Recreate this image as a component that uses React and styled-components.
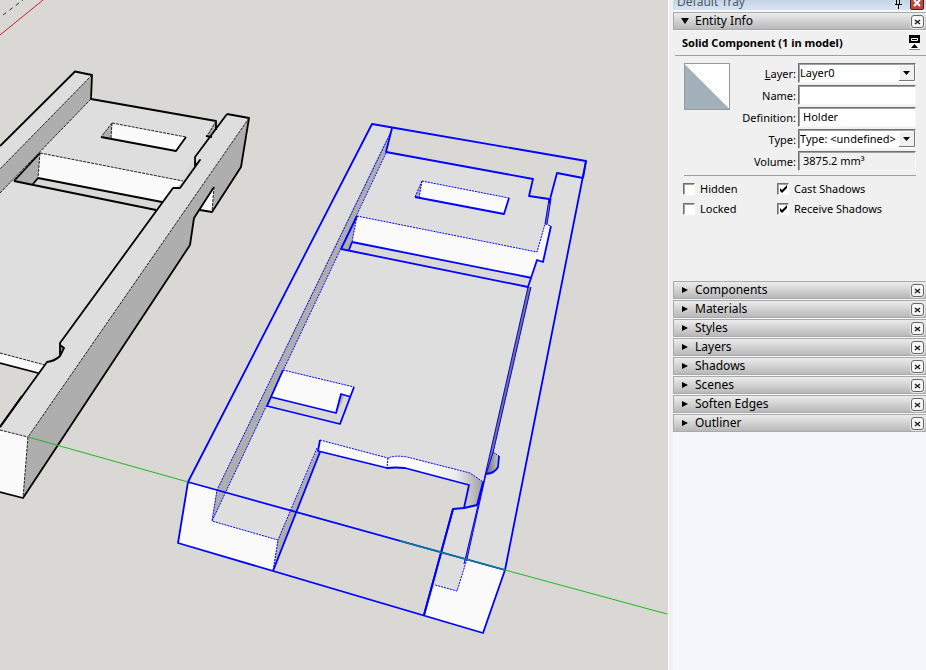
import React from "react";
import styled, { createGlobalStyle } from "styled-components";

const Global = createGlobalStyle`
  * { box-sizing: border-box; }
  body { margin: 0; background: #d9d8d4; overflow: hidden; font: 11px/14px "Noto Sans", sans-serif; color: #000; }
  button, input, select { font: inherit; color: inherit; margin: 0; }
`;

const Workspace = styled.div`
  display: grid;
  grid-template-columns: minmax(0, 1fr) 259px;
  height: 100vh;
`;
const Viewport = styled.main`
  min-width: 0;
  min-height: 0;
  background: #d9d8d4;
  svg { display: block; width: 100%; height: 100%; }
`;
const Tray = styled.aside`
  display: flex;
  flex-direction: column;
  overflow: hidden;
  background: #f4f8fd;
  border-left: 1px solid #d9d8d4;
  box-shadow: inset 1px 0 #fff, inset 5px 0 #f0f0f0;
  padding-left: 5px;
`;
const TrayTitle = styled.header`
  display: flex;
  align-items: flex-end;
  height: 10px;
  margin-bottom: 2px;
  padding: 0 2px 0 4px;
  background: linear-gradient(#c5d5e6, #d7e4f2);
  color: #4d5968;
  font: 12px/16px "Noto Sans", sans-serif;
  flex: none;
  h1 { flex: 1; margin: 0; font: inherit; }
`;
const TitleButton = styled.button`
  width: ${(p) => (p.$close ? 14 : 16)}px;
  height: 14px;
  margin-left: 4px;
  padding: 0;
  border: ${(p) => (p.$close ? "1px solid #4b1f1f" : "0")};
  border-radius: 2px;
  background: ${(p) => (p.$close ? "#b9473a" : "transparent")};
  svg { display: block; }
`;
const SectionBar = styled.div`
  display: flex;
  align-items: center;
  height: 18px;
  margin-bottom: 1px;
  padding: 0 2px 0 7px;
  border: 1px solid #aaa;
  border-right: 0;
  background: linear-gradient(#ececec, #b8b8b8);
  flex: none;
`;
const Toggle = styled.button`
  display: flex;
  flex: 1;
  align-items: center;
  gap: 6px;
  padding: 0;
  border: 0;
  background: none;
  font: 12px/16px "Noto Sans", sans-serif;
  text-align: left;
`;
const CloseButton = styled.button`
  display: grid;
  place-items: center;
  width: 13px;
  height: 13px;
  padding: 0;
  border: 1px solid #666;
  border-radius: 3px;
  background: #f6f6f6;
  box-shadow: 0 0 0 1px #e8e8e8;
`;
const EntityPanel = styled.section`
  height: 250px;
  flex: none;
  background: #f0f0f0;
  padding-left: 2px;
`;
const Summary = styled.div`
  display: flex;
  align-items: center;
  justify-content: space-between;
  height: 25px;
  padding: 0 5px 0 7px;
  border-bottom: 1px solid #a0a0a0;
  h2 { margin: 0; font: bold 11px/14px "Noto Sans", sans-serif; }
`;
const DetailButton = styled.button`
  padding: 0;
  border: 0;
  background: none;
  svg { display: block; }
`;
const Details = styled.div`
  display: grid;
  grid-template-columns: 46px minmax(0, 1fr);
  margin: 0 10px 0 9px;
  padding: 7px 0 4px;
  border-bottom: 1px solid #a0a0a0;
`;
const Swatch = styled.div`
  width: 46px;
  height: 47px;
  border: 1px solid #999;
  background: linear-gradient(to top right, #a3b1ba 50%, #fff 50%);
`;
const Fields = styled.div`
  display: grid;
  grid-template-columns: minmax(0, 1fr) 118px;
  grid-auto-rows: 20px;
  column-gap: 2px;
  row-gap: 2px;
  align-items: center;
  label { text-align: right; padding-top: 2px; }
`;
const sunken = `
  width: 100%;
  height: 20px;
  border: 1px solid;
  border-color: #707070 #f8f8f8 #f8f8f8 #707070;
  border-radius: 0;
  box-shadow: inset 1px 1px #a0a0a0;
`;
const TextInput = styled.input`
  ${sunken}
  padding: 0 4px 2px;
  background: ${(p) => (p.readOnly ? "#f0f0f0" : "#fff")};
`;
const SelectBox = styled.div`
  display: grid;
  select, svg { grid-area: 1 / 1; }
  svg { justify-self: end; align-self: center; margin-right: 1px; pointer-events: none; }
`;
const Select = styled.select`
  ${sunken}
  appearance: none;
  padding: 0 18px 0 1px;
  background: #fff;
`;
const Flags = styled.div`
  display: grid;
  grid-template-columns: 94px minmax(0, 1fr);
  grid-auto-rows: 20px;
  align-items: center;
  margin: 3px 0 0 8px;
  label { display: flex; align-items: center; gap: 5px; }
`;
const Check = styled.input`
  appearance: none;
  width: 12px;
  height: 12px;
  background: #fff;
  border: 1px solid;
  border-color: #707070 #fff #fff #707070;
  box-shadow: inset 1px 1px #a0a0a0;
  &:not(:checked) + svg { display: none; }
`;
const CheckCell = styled.span`
  display: grid;
  input, svg { grid-area: 1 / 1; }
  svg { pointer-events: none; }
`;

const Section = ({ name, open }) => (
  <SectionBar>
    <Toggle aria-expanded={!!open}>
      <svg width="8" height="8"><path d={open ? "M0 1h8L4 7z" : "M1 1v6l6-3z"} /></svg>
      {name}
    </Toggle>
    <CloseButton aria-label={`Close ${name}`}>
      <svg width="7" height="7"><path d="M1 2l5 4M6 2L1 6" stroke="#222" strokeWidth="1.5" /></svg>
    </CloseButton>
  </SectionBar>
);
const Dropdown = ({ id, value }) => (
  <SelectBox>
    <Select id={id}><option>{value}</option></Select>
    <svg width="16" height="16">
      <path d="M0 0h16v16H0z" fill="#f0f0f0" />
      <path d="M.5 15V.5H15" fill="none" stroke="#fff" />
      <path d="M15.5 0v15.5H0" fill="none" stroke="#777" />
      <path d="M4 6h7L7.5 10z" />
    </svg>
  </SelectBox>
);
const Flag = ({ name, checked }) => (
  <label>
    <CheckCell>
      <Check type="checkbox" defaultChecked={checked} />
      <svg width="12" height="12"><path d="M3 5l2 2L10 2v3L5 10 3 8z" /></svg>
    </CheckCell>
    {name}
  </label>
);

const Model = () => (
  <svg viewBox="0 0 667 670" preserveAspectRatio="xMinYMin slice" role="img" aria-label="Holder model">
    <defs>
      <linearGradient id="curve" x1="388" y1="0" x2="485" y2="0" gradientUnits="userSpaceOnUse">
        <stop offset="0" stopColor="#fafafa" /><stop offset=".25" stopColor="#fff" />
        <stop offset=".7" stopColor="#ececec" /><stop offset=".88" stopColor="#bbb" /><stop offset="1" stopColor="#999" />
      </linearGradient>
      <linearGradient id="bump"><stop stopColor="#666" /><stop offset="1" stopColor="#ccc" /></linearGradient>
    </defs>
    <path d="M0 35L43 0" stroke="#c22" />
    <path d="M3 15L23 0" stroke="#333" strokeDasharray="4 4" />

    <g strokeLinejoin="round">
      <path d="M91 99L216 121 215 133 60 350 45 365 0 353V190z" fill="#dedede" />
      <path d="M75 72L92 75 0 169V146z" fill="#dedede" />
      <path d="M92 75L91 99 0 193V169z" fill="#aeaeae" />
      <path d="M40 153L38 178 33 184 14 181z" fill="#aeaeae" />
      <path d="M40 153L183 181 162 202 38 178z" fill="#fafafa" />
      <path d="M38 178L162 202 156 210 33 184z" fill="#d9d8d4" />
      <path d="M112 123L186 137 176 151 101 137z" fill="#fafafa" />
      <path d="M112 123L111 138 101 137z" fill="#aeaeae" />
      <path d="M216 121L206 136 212 137 216 130z" fill="#aeaeae" />
      <path d="M0 353L45 365 38 374 0 363z" fill="#fafafa" />
      <path d="M0 363L38 373 0 427z" fill="#d9d8d4" />
      <path d="M227 114L249 118 28 437 0 430V427L47 362Q57 359 60 356V343L173 188H180L200 160 195 166V157z" fill="#dedede" />
      <path d="M249 118L241 167 212 212 214 187 194 218 190 245 23 498 28 437z" fill="#aeaeae" />
      <path d="M214 187L212 212 200 210z" fill="#fafafa" />
      <path d="M0 430L28 437 23 498 0 492z" fill="#fafafa" />
      <path d="M60 345L64 348 60 356z" fill="#999" />
      <g fill="none" stroke="#000" strokeWidth="1.8">
        <path d="M0 146L75 71.5 92 75 91 99 216 121 216 130M14 181L40 153M206 136L212 137" />
        <path d="M38 178L162 202M14 181L156 210M33 184L38 178M101 137L176 151 186 137" />
        <path d="M227 114L249 118 241 167 212 212 200 210M214 187L194 218 190 245 23 498 0 492" />
        <path d="M227 114L195 157V166L200 160 180 188H173L60 343V356Q55 361 47 362L0 427M60 345L64 348 60 356M0 363L38 373" />
        <path d="M22 396L0 427" strokeWidth="2" />
      </g>
      <g fill="none" stroke="#222" strokeWidth="1" strokeDasharray="3 1">
        <path d="M92 75L0 169M91 99L0 193M40 153L183 181M40 153L38 178M112 123L186 137M112 123L111 138M112 123L101 137M249 118L28 437L23 498M0 430L28 437M0 353L45 365M214 187L212 212M216 121L208 135" />
      </g>
    </g>

    <g strokeLinejoin="round">
      <path d="M372 124L392 128 386 152 533 179 529 196 549 199 557 173 582 177 586 161 505 570 188 482z" fill="#dedede" />
      <path d="M392 128L386 152 533 179 529 196 549 199 557 173 582 177 586 161z" fill="#d9d8d4" />
      <path d="M188 482L217 490 212 521 278 540 273 571 178 543z" fill="#fafafa" />
      <path d="M217 490L212 521 278 540 296 500 310 460 350 450 300 420 255 430z" fill="#dedede" />
      <path d="M392 128L386 152 212 521 217 490z" fill="#aeaeae" />
      <path d="M422 181L509 198 504 214 415 197z" fill="#fafafa" />
      <path d="M422 181L419 198 415 197z" fill="#aeaeae" />
      <path d="M357 216L352 242 349 250 341 249z" fill="#aeaeae" />
      <path d="M357 216L537 252 545 224 551 226 543 262 537 260 532 278 352 242z" fill="#fafafa" />
      <path d="M352 242L532 278 528 287 349 250z" fill="#d9d8d4" />
      <path d="M283 370L354 387 340 424 267 406z" fill="#d9d8d4" />
      <path d="M283 370L354 387 351 397 341 394 336 413 271 397z" fill="#fafafa" />
      <path d="M341 394L344 396 338 411 336 413z" fill="#aeaeae" />
      <path d="M318 451L387 468 405 468 469 485 464 508 453 509 424 615 273 571z" fill="#d9d8d4" />
      <path d="M320 440L388 458 387 468 318 451z" fill="#fafafa" />
      <path d="M388 458Q395 455 407 457L470 473 483 482 477 505 464 508 469 485 405 468Q395 467 387 468z" fill="url(#curve)" />
      <path d="M317 450L278 540 273 571 320 452z" fill="#aeaeae" />
      <path d="M453 509L477 505 467 559 457 591 435 585z" fill="#dedede" />
      <path d="M467 559L505 570 483 633 424 615 435 585 457 591z" fill="#fafafa" />
      <path d="M493 452L499 456 498 467Q495 473 486 474z" fill="url(#bump)" />
      <path d="M528 287L531 287 493 453 486 474 467 559 464 564 484 480z" fill="#777" />
      <path d="M549 199L551 199 547 224 545 224z" fill="#777" />
      <g fill="none" stroke="#00f" strokeWidth="1.8">
        <path d="M188 482L372 124 586 161 505 570 483 633 178 543 188 482 505 570" />
        <path d="M392 128L386 152 533 179 529 196 549 199M583 178L557 173 549 203M583 178L586 161" />
        <path d="M415 197L504 214 509 198M352 242L532 278M357 216L341 249 528 287 537 260 543 262 551 226M349 250L352 242" />
        <path d="M283 370L267 406 340 424 354 387M271 397L336 413 341 394 351 397" />
        <path d="M320 440L318 451 387 468Q395 467 405 468L469 485 464 508 453 509 424 615M464 508L477 505 483 482M320 452L273 571" />
        <path d="M499 456L498 467Q495 473 486 474" />
      </g>
      <g fill="none" stroke="#00f" strokeWidth="1" strokeDasharray="2 1">
        <path d="M392 130L217 490L212 521M386 153L212 521L278 540L273 571M422 181L509 198M422 181L415 197M422 181L419 198M357 216L537 252 545 224 551 226M357 216L352 242M283 370L354 387M320 440L388 458Q395 455 407 457L470 473 483 482M388 458L387 468M317 448L278 540M493 452L499 456M467 559L457 591 435 585" />
      </g>
      <g fill="none" stroke="#00f">
        <path d="M549 199L545 224M551 199L547 224M528 287L484 480 464 564M531 287L493 453 486 474 467 559" />
      </g>
      <path d="M453 509L424 615" stroke="#00f" strokeWidth="2" />
    </g>
    <path d="M28 437L188 482M505 570L667 614" stroke="#20b820" />
    <path d="M400 541L505 570" stroke="#087f90" strokeWidth="1.5" />
  </svg>
);

const sections = ["Components", "Materials", "Styles", "Layers", "Shadows", "Scenes", "Soften Edges", "Outliner"];

export default function App() {
  return (
    <Workspace>
      <Global />
      <Viewport><Model /></Viewport>
      <Tray>
        <TrayTitle>
          <h1>Default Tray</h1>
          <TitleButton aria-label="Pin tray"><svg width="16" height="14"><path d="M6.5 0v9M9.5 0v9M5 8.5h7M8.5 9v4" stroke="#000" /></svg></TitleButton>
          <TitleButton $close aria-label="Close tray"><svg width="12" height="12"><path d="M3 3l6 6M9 3L3 9" stroke="#fff" strokeWidth="2" /></svg></TitleButton>
        </TrayTitle>
        <Section name="Entity Info" open />
        <EntityPanel>
          <Summary>
            <h2>Solid Component (1 in model)</h2>
            <DetailButton aria-label="Hide details">
              <svg width="12" height="16"><path d="M0 0h11v15H0z" fill="#fff" /><path d="M0 0h11v8H0zM5.5 9L9 13H2z" /><path d="M2.500 3.500h6v2h-6z" fill="none" stroke="#fff" /><path d="M0 14.5h11" stroke="#888" /></svg>
            </DetailButton>
          </Summary>
          <Details>
            <Swatch />
            <Fields>
              <label htmlFor="layer"><u>L</u>ayer:</label><Dropdown id="layer" value="Layer0" />
              <label htmlFor="name">Name:</label><TextInput id="name" />
              <label htmlFor="definition">Definition:</label><TextInput id="definition" defaultValue="Holder" />
              <label htmlFor="type">Type:</label><Dropdown id="type" value="Type: <undefined>" />
              <label htmlFor="volume">Volume:</label><TextInput id="volume" readOnly value="3875.2 mm³" />
            </Fields>
          </Details>
          <Flags>
            <Flag name="Hidden" /><Flag name="Cast Shadows" checked />
            <Flag name="Locked" /><Flag name="Receive Shadows" checked />
          </Flags>
        </EntityPanel>
        <nav aria-label="Tray sections">{sections.map((name) => <Section key={name} name={name} />)}</nav>
      </Tray>
    </Workspace>
  );
}
